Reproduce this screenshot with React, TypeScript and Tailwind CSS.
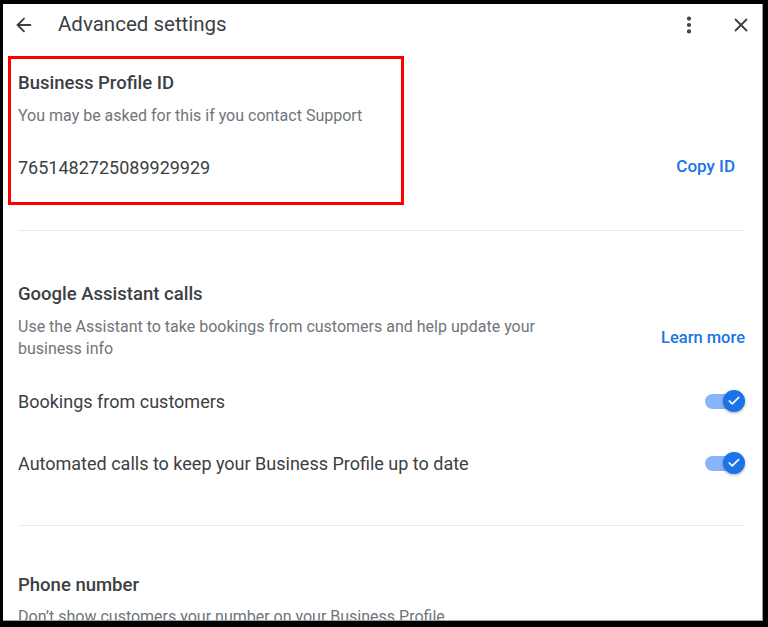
import { ArrowLeft, MoreVertical, X, Check } from "lucide-react";

function Toggle() {
	return (
		<div className="relative flex h-[22px] w-[42px] items-center">
			<div className="ml-[2px] h-[15px] w-[34px] rounded-full bg-[#8ab4f8]" />
			<div className="absolute right-0 top-0 flex h-[22px] w-[22px] items-center justify-center rounded-full bg-[#1a73e8] shadow-[0_1px_3px_rgba(0,0,0,0.35)]">
				<Check className="h-[14px] w-[14px] text-white" strokeWidth={3} />
			</div>
		</div>
	);
}

export default function App() {
	return (
		<div className="h-[627px] w-[768px] bg-black pb-[6px] pl-[3px] pr-[5px] pt-[4px] font-['Roboto',sans-serif]">
			<div className="relative h-full w-full overflow-hidden border-b border-r border-[#9aa0a6] bg-white">
				{/* Header */}
				<div className="flex h-[41px] items-center pl-[10px] pr-[10px] text-[#3c4043]">
					<ArrowLeft className="h-[22px] w-[22px]" strokeWidth={2} />
					<span className="ml-[23px] text-[20.5px]">Advanced settings</span>
					<div className="flex-1" />
					<MoreVertical className="mr-[30px] h-[22px] w-[22px]" strokeWidth={2.6} />
					<X className="h-[22px] w-[22px]" strokeWidth={2} />
				</div>

				{/* highlight box */}
				<div className="absolute left-[5px] top-[52px] h-[149px] w-[396px] border-[3px] border-[#ff0000]" />

				<div className="pl-[15px] pr-[17px]">
					{/* Business Profile ID */}
					<div className="mt-[26px] text-[18.5px] font-medium leading-[24px] text-[#3c4043]">
						Business Profile ID
					</div>
					<div className="mt-[11px] text-[16px] leading-[20px] text-[#70757a]">
						You may be asked for this if you contact Support
					</div>
					<div className="mt-[29px] flex h-[24px] items-center justify-between">
						<span className="text-[18px] text-[#3c4043]">7651482725089929929</span>
						<span className="mr-[10px] text-[17px] font-medium text-[#1a73e8]">Copy ID</span>
					</div>

					<div className="mt-[51px] h-px bg-[#e8eaed]" />

					{/* Google Assistant calls */}
					<div className="mt-[51px] text-[18.5px] font-medium leading-[24px] text-[#3c4043]">
						Google Assistant calls
					</div>
					<div className="mt-[10px] flex items-center justify-between">
						<p className="w-[560px] text-[16px] leading-[22px] text-[#70757a]">
							Use the Assistant to take bookings from customers and help update your
							business info
						</p>
						<span className="text-[16.5px] font-medium text-[#1a73e8]">Learn more</span>
					</div>
					<div className="mt-[29px] flex h-[24px] items-center justify-between">
						<span className="text-[18px] text-[#3c4043]">Bookings from customers</span>
						<Toggle />
					</div>
					<div className="mt-[38px] flex h-[24px] items-center justify-between">
						<span className="text-[18px] text-[#3c4043]">
							Automated calls to keep your Business Profile up to date
						</span>
						<Toggle />
					</div>

					<div className="mt-[50px] h-px bg-[#e8eaed]" />

					{/* Phone number */}
					<div className="mt-[47px] text-[18.5px] font-medium leading-[24px] text-[#3c4043]">
						Phone number
					</div>
					<div className="mt-[10px] text-[16px] leading-[20px] text-[#70757a]">
						Don’t show customers your number on your Business Profile
					</div>
				</div>
			</div>
		</div>
	);
}
